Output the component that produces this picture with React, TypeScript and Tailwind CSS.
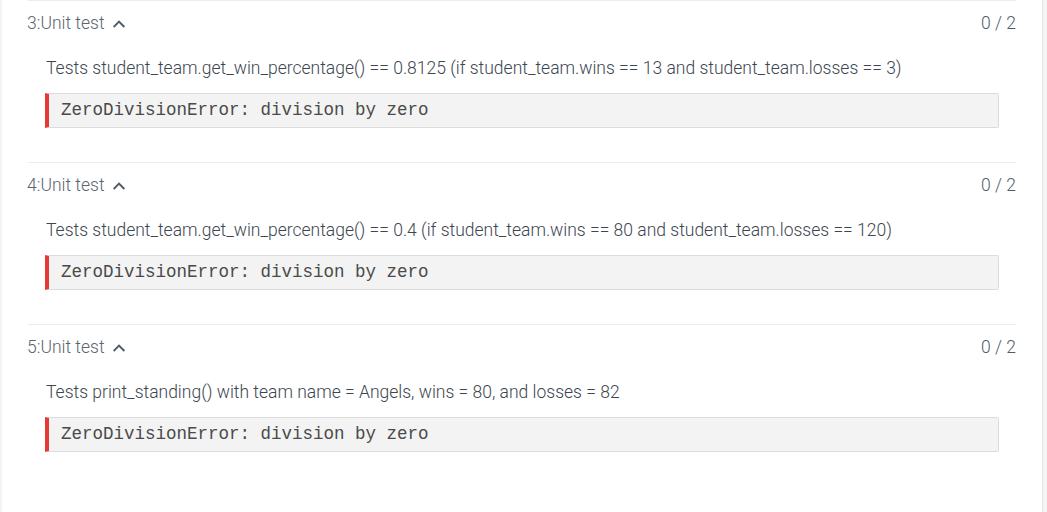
import React from 'react';

type TestResult = {
  index: number;
  description: string;
  error: string;
  score: string;
};

const RESULTS: TestResult[] = [
  {
    index: 3,
    description:
      'Tests student_team.get_win_percentage() == 0.8125 (if student_team.wins == 13 and student_team.losses == 3)',
    error: 'ZeroDivisionError: division by zero',
    score: '0 / 2',
  },
  {
    index: 4,
    description:
      'Tests student_team.get_win_percentage() == 0.4 (if student_team.wins == 80 and student_team.losses == 120)',
    error: 'ZeroDivisionError: division by zero',
    score: '0 / 2',
  },
  {
    index: 5,
    description: 'Tests print_standing() with team name = Angels, wins = 80, and losses = 82',
    error: 'ZeroDivisionError: division by zero',
    score: '0 / 2',
  },
];

function ChevronUp() {
  return (
    <svg width="14" height="14" viewBox="0 0 24 24" className="ml-[7px] mt-[1px]">
      <path d="M4 16l8-8 8 8" fill="none" stroke="#4f5b66" strokeWidth="3.4" strokeLinecap="square" />
    </svg>
  );
}

function TestSection({ result }: { result: TestResult }) {
  return (
    <div className="border-t border-[#ececec] h-[162px]">
      <div className="flex items-center justify-between pt-[10px] h-[35px]">
        <div className="flex items-center text-[17.5px] text-[#5a6570]">
          <span className="-ml-[1px]">{result.index}:Unit test</span>
          <ChevronUp />
        </div>
        <span className="text-[17.5px] text-[#4f5b66]">{result.score}</span>
      </div>
      <p className="mt-[20px] pl-[18px] text-[17.5px] leading-[24px] text-[#3c4650]">{result.description}</p>
      <div className="mx-[17px] mt-[13px] h-[35px] flex items-center bg-[#f3f3f3] border border-[#dcdcdc] border-l-[4px] border-l-[#e53935] rounded-r-[2px] pl-[12px]">
        <span className="font-['Courier_New','Nimbus_Mono_PS','FreeMono','Liberation_Mono',monospace] font-normal text-[17.5px] text-[#4a4a4a]">
          {result.error}
        </span>
      </div>
    </div>
  );
}

export default function App() {
  return (
    <div className="w-[1047px] h-[512px] bg-[#f4f4f4] overflow-hidden font-['Roboto',sans-serif] font-light">
      <div className="ml-[2px] w-[1041px] h-full bg-white border-r border-[#e6e6e6]">
        <div className="pl-[26px] pr-[26px]">
          {RESULTS.map((r) => (
            <TestSection key={r.index} result={r} />
          ))}
        </div>
      </div>
    </div>
  );
}
